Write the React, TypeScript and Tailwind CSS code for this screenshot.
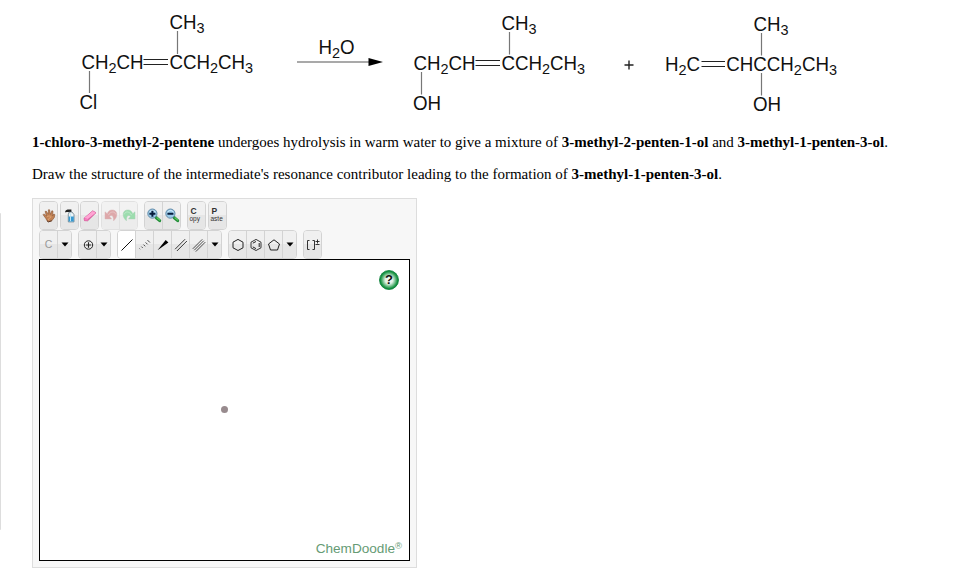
import type { ReactNode } from "react";
import { clsx } from "clsx";

interface FormulaProps {
  x: number;
  y: number;
  // digits are set as subscripts
  text: string;
}

function Formula({ x, y, text }: FormulaProps) {
  let lowered = false;

  return (
    <text transform={`translate(${x} ${y}) scale(.945 1)`} fontSize="19.8" fill="#111">
      {text.split("").map((char, index) => {
        const isDigit = /\d/.test(char);
        const dy = isDigit ? 4 : lowered ? -4 : 0;
        lowered = isDigit;
        return (
          <tspan key={index} dy={dy} fontSize={isDigit ? 15.3 : 19.8}>
            {char}
          </tspan>
        );
      })}
    </text>
  );
}

function Reaction() {
  return (
    <svg
      width="940"
      height="120"
      viewBox="32 0 940 120"
      className="block font-['Liberation_Sans',Arial,sans-serif]"
    >
      {/* Reactant */}
      <Formula x={169.5} y={29} text="CH3" />
      <Formula x={81.5} y={69} text="CH2CH" />
      <Formula x={169.5} y={69} text="CCH2CH3" />
      <Formula x={79.5} y={109} text="Cl" />

      {/* Reaction arrow */}
      <Formula x={318.5} y={54} text="H2O" />
      <path d="M297 62H370" stroke="#555" strokeWidth="1.2" />
      <path d="M368.5 58L383 62L368.5 66Z" fill="#000" />

      {/* Products */}
      <Formula x={501.5} y={30} text="CH3" />
      <Formula x={413.5} y={70} text="CH2CH" />
      <Formula x={501.5} y={70} text="CCH2CH3" />
      <Formula x={413} y={110} text="OH" />
      <path d="M624.5 65H633.5M629 60.5V69.5" stroke="#222" strokeWidth="1.4" />
      <Formula x={753.5} y={31} text="CH3" />
      <Formula x={665} y={71} text="H2C" />
      <Formula x={726.3} y={71} text="CHCCH2CH3" />
      <Formula x={753} y={111} text="OH" />

      {/* Bonds */}
      <path
        d="M177.5 31V54M89.5 71V93M509.5 32V54.5M421.5 72V94.5M761.5 33V55.5M761.5 73V95.5"
        stroke="#777"
        strokeWidth="1.2"
      />
      <path
        d="M143.5 59.5H168M143.5 64.5H168M475.5 60.5H500M475.5 65.5H500M701.5 61.5H725M701.5 66.5H725"
        stroke="#222"
        strokeWidth="1"
      />
    </svg>
  );
}

function Icon({ children }: { children: ReactNode }) {
  return (
    <svg width="16" height="16" viewBox="0 0 16 16" fill="none" className="block shrink-0">
      {children}
    </svg>
  );
}

const HandIcon = () => (
  <Icon>
    <path
      d="M6 12.8L7.5 13.8L10.8 12.8L13.3 9.5L13.8 6.5L12.8 6L11.6 7.8L12 3.2L10.9 2.7L9.4 6.4L8.6 1.8L7.4 1.8L7.3 6.2L5.1 3L4.1 3.6L5.5 7.7L2.8 5.9L2.1 6.7L4.8 10.4Z"
      fill="#c28254"
      stroke="#855031"
      strokeWidth=".6"
      strokeLinejoin="round"
    />
    <path d="M6 8.5C7.5 7.8 9 7.9 10.4 8.7M7.4 12C7.7 10.4 8.6 9.5 10 9.5" stroke="#dfa67a" strokeWidth=".9" />
    <path d="M6 12.9L7.6 13.8L10.8 12.8" stroke="#53301e" strokeWidth=".9" />
  </Icon>
);

const BottleIcon = () => (
  <Icon>
    <path d="M3.1 3.8C3.8 2 5 1.6 6.8 1.6H9.4V4H6.8C5.3 4 5 3.8 3.5 4.4Z" fill="#222" />
    <path d="M7.2 4H10L12 6.6V13.9H6.3V6.6Z" fill="#eef5f8" stroke="#526b78" strokeWidth=".7" />
    <path d="M6.6 8.6H11.8V13.6H6.6Z" fill="#3699d1" />
    <path d="M8.5 8.3V13.2M8.6 5.5V8" stroke="#bce5f4" />
  </Icon>
);

const EraserIcon = () => (
  <Icon>
    <path d="M2 10.3L10.7 2.8L14 4.7L5.7 12.8L2.5 12.7Z" fill="#e963ad" stroke="#bd437f" strokeWidth=".6" strokeLinejoin="round" />
    <path d="M2.3 10L10.7 3L13.8 4.8L5.7 11Z" fill="#ffa4d3" />
    <path d="M2.3 10.2L5.7 10.9V12.6L2.6 12.5Z" fill="#f57fbe" />
  </Icon>
);

const UndoIcon = () => (
  <Icon>
    <path
      d="M2 3.8V10.9H8.5L6.5 8.5C8.5 6.4 10.8 7.3 10.6 12.8C15.8 8.3 14.4 1.5 8.8 2C6.6 2.2 5.1 3.5 4.2 5.7Z"
      fill="#cf7477"
      stroke="#c4878a"
      strokeWidth=".5"
    />
    <path d="M5.4 7.2C7.5 3.3 11.4 2.8 12.8 6.4" stroke="#dda5a5" />
  </Icon>
);

const RedoIcon = () => (
  <Icon>
    <path
      d="M14 3.8V10.9H7.5L9.5 8.5C7.5 6.4 5.2 7.3 5.4 12.8C.2 8.3 1.6 1.5 7.2 2C9.4 2.2 10.9 3.5 11.8 5.7Z"
      fill="#60cc7e"
      stroke="#77b98a"
      strokeWidth=".5"
    />
    <path d="M10.6 7.2C8.5 3.3 4.6 2.8 3.2 6.4" stroke="#99e0ad" />
  </Icon>
);

function ZoomIcon({ zoomIn }: { zoomIn?: boolean }) {
  return (
    <Icon>
      <path d="M10 9.5L13.7 12.7" stroke="#238d38" strokeWidth="3" strokeLinecap="round" />
      <path d="M10.7 9.5L14 12.3" stroke="#60cf66" strokeWidth="1.1" />
      <circle cx="6.4" cy="5.6" r="4.6" fill="#99cae8" stroke="#638ba8" strokeWidth="1" />
      <path d="M3.6 4.7C4.7 1.7 8.3 1.7 9.4 4.7" stroke="#d9f1ff" />
      <path d={zoomIn ? "M3.4 5.7H9.4M6.4 2.7V8.7" : "M3.4 5.7H9.4"} stroke="#071d3d" strokeWidth="2" />
    </Icon>
  );
}

function ClipboardLabel({ initial, rest }: { initial: string; rest: string }) {
  return (
    <span className="flex h-5 w-4 flex-col items-start justify-start pl-[2px] font-['Liberation_Sans',Arial,sans-serif] text-[#333]">
      <span className="text-[8.5px] leading-[10px] font-bold">{initial}</span>
      <span className="-ml-px -mt-px text-[6.5px] leading-[8px]">{rest}</span>
    </span>
  );
}

const CaretIcon = () => (
  <svg width="8" height="5" viewBox="0 0 8 5" className="block shrink-0">
    <path d="M.5 .6H7.5L4 4.4Z" fill="#000" />
  </svg>
);

const ChargeIcon = () => (
  <Icon>
    <circle cx="8.5" cy="8" r="4.2" stroke="#222" />
    <path d="M5.8 8H11.2M8.5 5.3V10.7" stroke="#222" strokeWidth="1.1" />
  </Icon>
);

const SingleBondIcon = () => (
  <Icon>
    <path d="M2.5 13.5L13.5 2.5" stroke="#111" />
  </Icon>
);

const RecessedBondIcon = () => (
  <Icon>
    <path d="M2.5 11.5L3.2 12.2M4.4 9.6L5.7 10.9M6.5 7.6L8.2 9.3M8.6 5.4L10.5 7.3M10.5 3.1L12.9 5.5" stroke="#333" strokeWidth=".9" />
  </Icon>
);

const WedgeBondIcon = () => (
  <Icon>
    <path d="M2.5 13.3L10.7 3L13.4 5.4Z" fill="#000" />
  </Icon>
);

const DoubleBondIcon = () => (
  <Icon>
    <path d="M2.1 12.2L12.1 2.2M3.9 14L13.9 4" stroke="#222" strokeWidth=".9" />
  </Icon>
);

const TripleBondIcon = () => (
  <Icon>
    <path d="M1.8 11.8L11.3 2.3M3.3 13.2L12.8 3.7M4.8 14.6L14.3 5.1" stroke="#222" strokeWidth=".8" />
  </Icon>
);

const HEXAGON = "M8 2.4L13 5.2V10.8L8 13.5L3 10.8V5.2Z";

const HexagonIcon = () => (
  <Icon>
    <path d={HEXAGON} stroke="#222" />
  </Icon>
);

const BenzeneIcon = () => (
  <Icon>
    <path d={HEXAGON} stroke="#222" strokeWidth=".9" />
    <path d="M4.8 6.2L8 4.5M4.8 9.9L8 11.6M11.2 6V10" stroke="#222" />
  </Icon>
);

const PentagonIcon = () => (
  <Icon>
    <path d="M8 2.8L13.5 7L11.5 13H4.5L2.5 7Z" stroke="#222" />
  </Icon>
);

const BracketIcon = () => (
  <Icon>
    <path d="M4.5 3.5H2.5V12.5H4.5M7.5 3.5H9.5V12.5H7.5" stroke="#333" />
    <path d="M10.5 4.5H14.5M12.5 2.5V6.5M10.5 7.5H14.5" stroke="#222" strokeWidth=".9" />
  </Icon>
);

interface Tool {
  label: string;
  width: string;
  icon: ReactNode;
  active?: boolean;
}

interface ToolGroupProps {
  tools: Tool[];
  className?: string;
}

function ToolGroup({ tools, className }: ToolGroupProps) {
  return (
    <div className={clsx("flex h-[29px] shrink-0 overflow-hidden rounded-[4px] border border-[#d3d3d3]", className)}>
      {tools.map((tool) => (
        <button
          key={tool.label}
          aria-label={tool.label}
          className={clsx(
            "flex shrink-0 items-center justify-center border-r border-[#d3d3d3] last:border-r-0",
            tool.active ? "bg-white" : "bg-linear-to-b from-[#f0f0f0] from-50% to-[#e6e6e6] to-50%",
            tool.width
          )}
        >
          {tool.icon}
        </button>
      ))}
    </div>
  );
}

const ELEMENT_LABEL = (
  <span className="font-['Liberation_Sans',Arial,sans-serif] text-[10.5px] leading-none text-[#999]">C</span>
);

function Sketcher() {
  return (
    <div className="h-[370px] w-[385px] border border-[#ddd] bg-[#f7f7f7] px-1.5 pt-0.5">
      <div className="flex">
        <ToolGroup tools={[{ label: "Move", width: "w-[17px]", icon: <HandIcon /> }]} />
        <ToolGroup className="ml-0.5" tools={[{ label: "Clear", width: "w-[17px]", icon: <BottleIcon /> }]} />
        <ToolGroup className="ml-px" tools={[{ label: "Erase", width: "w-[17px]", icon: <EraserIcon /> }]} />
        <ToolGroup
          className="ml-0.5 opacity-60"
          tools={[
            { label: "Undo", width: "w-[18px]", icon: <UndoIcon /> },
            { label: "Redo", width: "w-[17px]", icon: <RedoIcon /> },
          ]}
        />
        <ToolGroup
          className="ml-1.5"
          tools={[
            { label: "Zoom in", width: "w-[18px]", icon: <ZoomIcon zoomIn /> },
            { label: "Zoom out", width: "w-[17px]", icon: <ZoomIcon /> },
          ]}
        />
        <ToolGroup
          className="ml-1.5"
          tools={[{ label: "Copy", width: "w-[17px]", icon: <ClipboardLabel initial="C" rest="opy" /> }]}
        />
        <ToolGroup
          className="ml-0.5"
          tools={[{ label: "Paste", width: "w-[17px]", icon: <ClipboardLabel initial="P" rest="aste" /> }]}
        />
      </div>

      <div className="flex">
        <ToolGroup
          tools={[
            { label: "Element", width: "w-[18px]", icon: ELEMENT_LABEL },
            { label: "More elements", width: "w-[13px]", icon: <CaretIcon /> },
          ]}
        />
        <ToolGroup
          className="ml-1.5"
          tools={[
            { label: "Charge", width: "w-[18px]", icon: <ChargeIcon /> },
            { label: "More attributes", width: "w-[13px]", icon: <CaretIcon /> },
          ]}
        />
        <ToolGroup
          className="ml-1.5"
          tools={[
            { label: "Single bond", width: "w-[18px]", icon: <SingleBondIcon />, active: true },
            { label: "Recessed bond", width: "w-[18px]", icon: <RecessedBondIcon /> },
            { label: "Wedge bond", width: "w-[18px]", icon: <WedgeBondIcon /> },
            { label: "Double bond", width: "w-[18px]", icon: <DoubleBondIcon /> },
            { label: "Triple bond", width: "w-[18px]", icon: <TripleBondIcon /> },
            { label: "More bonds", width: "w-[13px]", icon: <CaretIcon /> },
          ]}
        />
        <ToolGroup
          className="ml-1.5"
          tools={[
            { label: "Cyclohexane", width: "w-[18px]", icon: <HexagonIcon /> },
            { label: "Benzene", width: "w-[18px]", icon: <BenzeneIcon /> },
            { label: "Cyclopentane", width: "w-[18px]", icon: <PentagonIcon /> },
            { label: "More rings", width: "w-[13px]", icon: <CaretIcon /> },
          ]}
        />
        <ToolGroup className="ml-1.5" tools={[{ label: "Brackets", width: "w-[17px]", icon: <BracketIcon /> }]} />
      </div>

      {/* Drawing area */}
      <div className="relative flex h-[302px] w-[371px] flex-col items-end justify-between border border-black bg-white pt-2.5 pr-[7px] pb-[3px]">
        <button aria-label="Help" className="mr-[3px]">
          <svg width="20" height="20" viewBox="0 0 20 20" className="block font-['Liberation_Sans',Arial,sans-serif]">
            <defs>
              <radialGradient id="help">
                <stop offset="0" stopColor="#fff" />
                <stop offset=".4" stopColor="#e0f1e5" />
                <stop offset=".85" stopColor="#23994b" />
                <stop offset="1" stopColor="#008435" />
              </radialGradient>
            </defs>
            <circle cx="10" cy="10" r="9.5" fill="url(#help)" stroke="#087e36" strokeWidth=".8" />
            <text x="10" y="14" fontSize="13" fontWeight="bold" textAnchor="middle" fill="#111">
              ?
            </text>
          </svg>
        </button>
        <span className="absolute top-[146px] left-[181px] size-[7px] rounded-full bg-[#988b8e]" />
        <span className="flex items-start font-['Liberation_Sans',Arial,sans-serif] text-[13.6px] leading-4 text-[#669b75]">
          ChemDoodle
          <span className="text-[9.5px] leading-[9px]">®</span>
        </span>
      </div>
    </div>
  );
}

export default function App() {
  return (
    <div className="flex h-[582px] w-[972px] overflow-hidden bg-white text-black">
      <div className="mt-[213px] h-[317px] w-px shrink-0 rounded-r bg-[#ddd]" />
      <main className="ml-[31px] w-[940px] shrink-0">
        <Reaction />
        <div className="flex h-[78px] flex-col gap-3 pt-3 font-['Liberation_Serif','Times_New_Roman',serif] text-[15px] leading-5 whitespace-nowrap">
          <p>
            <b>1-chloro-3-methyl-2-pentene</b> undergoes hydrolysis in warm water to give a mixture of{" "}
            <b>3-methyl-2-penten-1-ol</b> and <b>3-methyl-1-penten-3-ol</b>.
          </p>
          <p>
            Draw the structure of the intermediate's resonance contributor leading to the formation of{" "}
            <b>3-methyl-1-penten-3-ol</b>.
          </p>
        </div>
        <Sketcher />
      </main>
    </div>
  );
}
